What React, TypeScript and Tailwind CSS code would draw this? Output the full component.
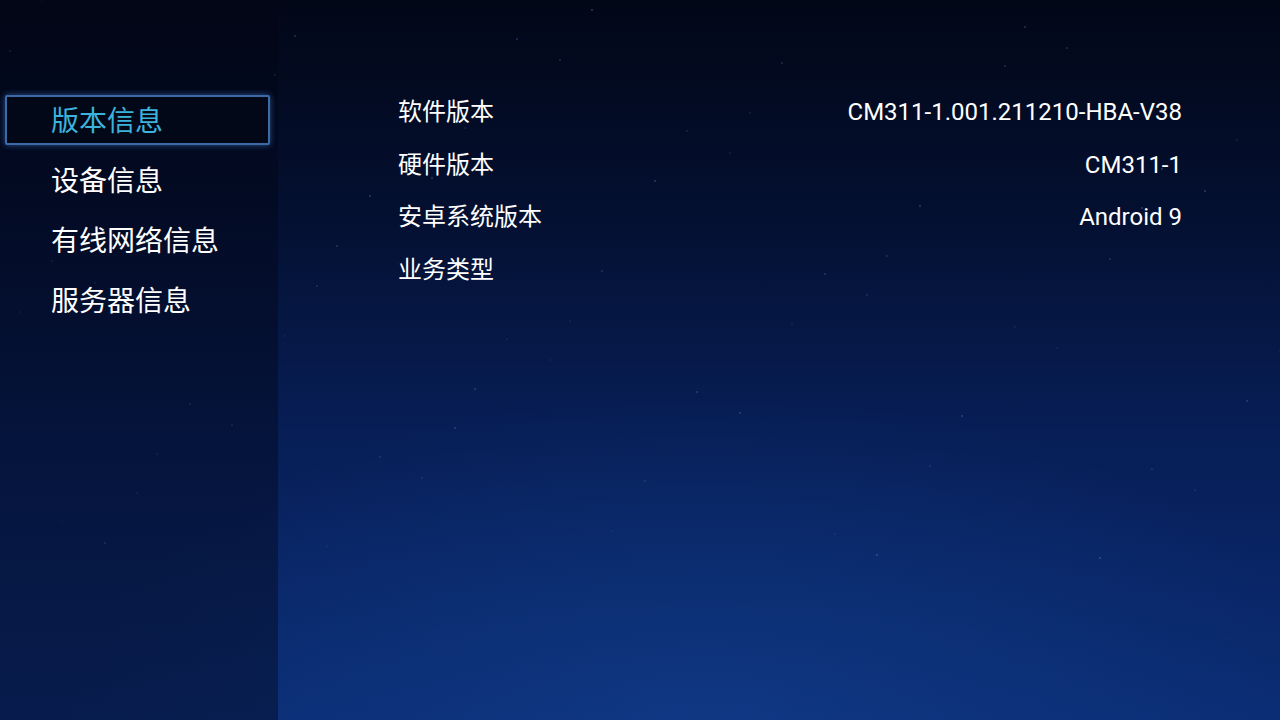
import React from "react";

const menu = ["版本信息", "设备信息", "有线网络信息", "服务器信息"];

const rows: { label: string; value: string }[] = [
  { label: "软件版本", value: "CM311-1.001.211210-HBA-V38" },
  { label: "硬件版本", value: "CM311-1" },
  { label: "安卓系统版本", value: "Android 9" },
  { label: "业务类型", value: "" },
];

// deterministic star field
const stars = Array.from({ length: 70 }, (_, i) => {
  const x = (i * 137.5 + 41) % 1280;
  const y = (i * 89.3 + (i % 7) * 53) % 560;
  const o = 0.1 + ((i * 37) % 30) / 100;
  return { x, y, o };
});

export default function App() {
  return (
    <div
      className="relative flex h-[720px] w-[1280px] overflow-hidden bg-[linear-gradient(180deg,#020717_0%,#041031_30%,#071e56_60%,#0b2c74_100%)]"
      style={{ fontFamily: 'Roboto, "Noto Sans CJK SC", sans-serif' }}
    >
      <div className="pointer-events-none absolute inset-0 bg-[radial-gradient(ellipse_50%_45%_at_55%_100%,rgba(20,70,150,0.45),transparent)]" />
      {stars.map((s, i) => (
        <span
          key={i}
          className="pointer-events-none absolute h-[2px] w-[2px] rounded-full bg-[#6f8fd0]"
          style={{ left: s.x, top: s.y, opacity: s.o }}
        />
      ))}

      <aside className="relative z-10 flex w-[278px] shrink-0 flex-col gap-[10px] bg-[#020614]/40 pt-[95px] pl-[5px] pr-[8px]">
        {menu.map((item, i) => (
          <div
            key={item}
            className={
              i === 0
                ? "flex h-[50px] items-center rounded-[2px] border-2 border-[#3b6aa6] bg-[#030818] pt-[3px] pl-[44px] text-[28px] text-[#3cb3dc] shadow-[0_0_6px_rgba(70,130,210,0.6)]"
                : "flex h-[50px] items-center pt-[3px] pl-[46px] text-[28px] text-white"
            }
          >
            {item}
          </div>
        ))}
      </aside>

      <main className="relative z-10 flex flex-1 flex-col pt-[86px] pl-[120px] pr-[98px]">
        {rows.map((r) => (
          <div
            key={r.label}
            className="flex h-[52.5px] items-center justify-between text-[24px] text-white"
          >
            <span>{r.label}</span>
            <span>{r.value}</span>
          </div>
        ))}
      </main>
    </div>
  );
}
